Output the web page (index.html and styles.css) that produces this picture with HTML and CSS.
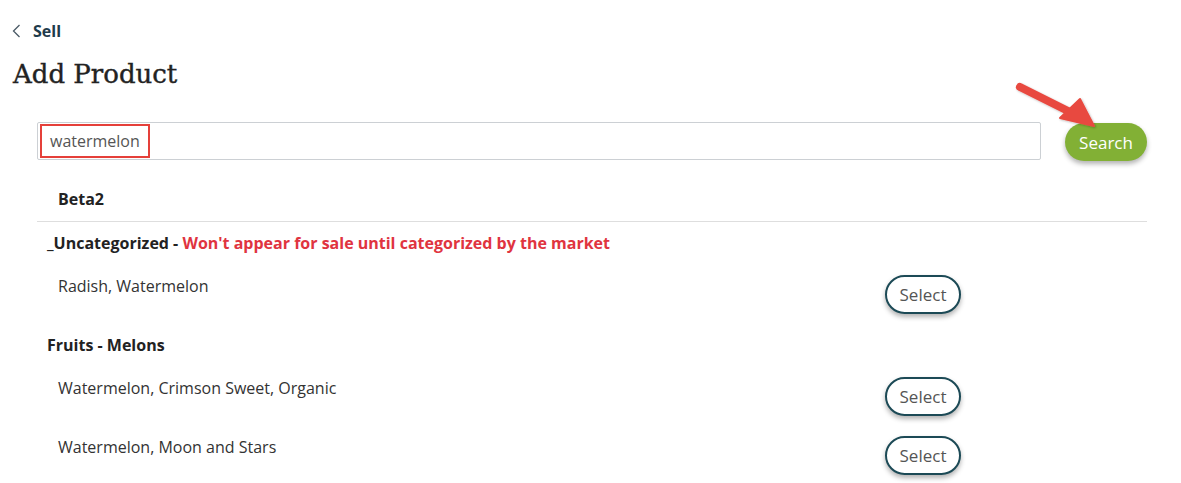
FILE: index.html
```html
<!DOCTYPE html>
<html lang="en">
<head>
<meta charset="utf-8">
<title>Add Product</title>
<link rel="stylesheet" href="styles.css">
</head>
<body>
<div class="page">
  <a class="back" href="#">
    <svg class="chev" width="9" height="14" viewBox="0 0 9 14"><path d="M7.5 1 L1.5 7 L7.5 13" fill="none" stroke="#4a5a66" stroke-width="1.3"/></svg>
    <span>Sell</span>
  </a>
  <h1 class="title">Add Product</h1>

  <div class="content">
    <div class="search-row">
      <div class="input">
        <span class="query">watermelon</span>
      </div>
      <button class="search-btn">Search</button>
    </div>

    <div class="market">Beta2</div>
    <div class="divider"></div>

    <div class="category">_Uncategorized - <span class="warn">Won't appear for sale until categorized by the market</span></div>
    <div class="item">
      <span class="name">Radish, Watermelon</span>
      <button class="select-btn">Select</button>
    </div>

    <div class="category">Fruits - Melons</div>
    <div class="item">
      <span class="name">Watermelon, Crimson Sweet, Organic</span>
      <button class="select-btn">Select</button>
    </div>
    <div class="item">
      <span class="name">Watermelon, Moon and Stars</span>
      <button class="select-btn">Select</button>
    </div>
  </div>

  <svg class="arrow" width="110" height="70" viewBox="0 0 110 70">
    <defs>
      <filter id="sh" x="-20%" y="-20%" width="140%" height="140%">
        <feDropShadow dx="1" dy="1" stdDeviation="1" flood-color="#000" flood-opacity="0.25"/>
      </filter>
    </defs>
    <g filter="url(#sh)" fill="#e84a40" stroke="#e84a40">
      <line x1="12" y1="13" x2="66" y2="40" stroke-width="8" stroke-linecap="round"/>
      <polygon points="52,44 72,25 86,52" stroke-width="2" stroke-linejoin="round"/>
    </g>
  </svg>
</div>
</body>
</html>
```
FILE: styles.css
```css
* { box-sizing: border-box; }
html, body { margin: 0; padding: 0; background: #fff; }
body {
  font-family: "Open Sans", "Liberation Sans", sans-serif;
  color: #333;
  width: 1181px;
  height: 483px;
  overflow: hidden;
}
.page { position: relative; padding-top: 21px; }
.back {
  display: flex;
  align-items: center;
  gap: 12px;
  margin-left: 12px;
  height: 20px;
  text-decoration: none;
  color: #1f3b4b;
  font-weight: 700;
  font-size: 16px;
}
.chev { display: block; }
.title {
  margin: 17px 0 0 13px;
  font-family: "DejaVu Serif", "Liberation Serif", serif;
  font-weight: 400;
  font-size: 26px;
  line-height: 32px;
  color: #222;
  -webkit-text-stroke: 0.4px #222;
}
.content { margin: 32px 34px 0 37px; width: 1110px; }
.search-row { display: flex; align-items: flex-start; gap: 24px; }
.input {
  width: 1004px;
  height: 38px;
  border: 1px solid #ccd0d4;
  border-radius: 2px;
  padding: 1px 2px;
}
.query {
  display: inline-block;
  height: 34px;
  line-height: 30px;
  padding: 0 8px;
  border: 2px solid #e5403a;
  font-size: 16px;
  color: #555;
}
.search-btn {
  width: 82px;
  height: 38px;
  margin-top: 1px;
  border: none;
  border-radius: 19px;
  background: #82b035;
  color: #fff;
  font-family: "Open Sans", sans-serif;
  font-size: 17px;
  box-shadow: 0 3px 5px rgba(0,0,0,0.3);
  padding: 0;
}
.market {
  margin-top: 27px;
  padding-left: 21px;
  font-weight: 700;
  font-size: 16px;
  line-height: 22px;
  color: #222;
}
.divider { margin-top: 11px; height: 1px; background: #dedede; }
.category {
  margin-top: 10px;
  padding-left: 10px;
  font-weight: 700;
  font-size: 16px;
  line-height: 22px;
  color: #222;
}
.category + .item { margin-top: 19px; }
.item + .category { margin-top: 2px; }
.warn { color: #e0343f; }
.item {
  display: grid;
  grid-template-columns: 827px auto;
  height: 59px;
  padding-left: 21px;
  align-items: start;
}
.name { font-size: 16px; line-height: 22px; padding-top: 2px; color: #333; }
.select-btn {
  width: 76px;
  height: 39px;
  margin-top: 2px;
  border: 2px solid #1c4a56;
  border-radius: 20px;
  background: #fff;
  color: #555;
  font-family: "Open Sans", sans-serif;
  font-size: 17px;
  padding: 0;
  box-shadow: 0 3px 5px rgba(0,0,0,0.3);
}
.arrow { position: absolute; left: 1008px; top: 74px; }
```
